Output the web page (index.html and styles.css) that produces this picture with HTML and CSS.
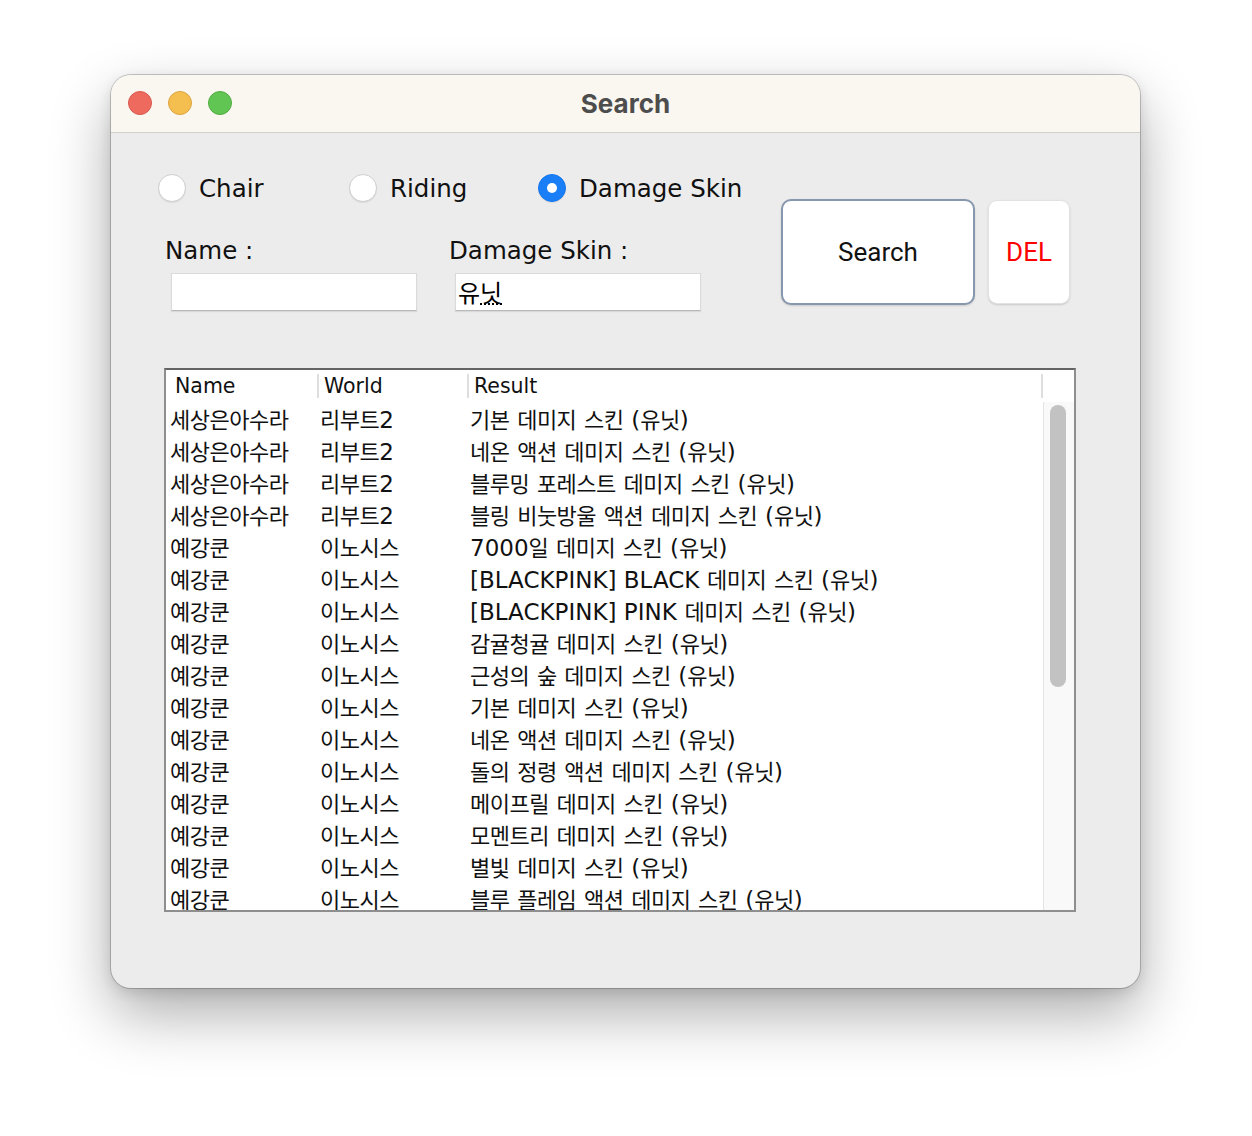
FILE: index.html
```html
<!DOCTYPE html>
<html lang="ko">
<head>
<meta charset="utf-8">
<title>Search</title>
<link rel="stylesheet" href="styles.css">
</head>
<body>
<div class="window">
  <div class="titlebar">
    <div class="lights">
      <span class="light red"></span>
      <span class="light yellow"></span>
      <span class="light green"></span>
    </div>
    <div class="title">Search</div>
  </div>
  <div class="content">
    <div class="top">
      <div class="left">
        <div class="radios">
          <label class="radio r1"><span class="dot"></span><span class="rtext">Chair</span></label>
          <label class="radio r2"><span class="dot"></span><span class="rtext">Riding</span></label>
          <label class="radio r3"><span class="dot on"></span><span class="rtext">Damage Skin</span></label>
        </div>
        <div class="fields">
          <div class="fcol">
            <div class="flabel">Name :</div>
            <div class="field"></div>
          </div>
          <div class="fcol">
            <div class="flabel">Damage Skin :</div>
            <div class="field"><span class="ftext">유<span class="ime">닛</span></span></div>
          </div>
        </div>
      </div>
      <div class="buttons">
        <div class="btn search">Search</div>
        <div class="btn del">DEL</div>
      </div>
    </div>

    <div class="table">
      <div class="thead">
        <div class="th c1">Name</div>
        <div class="th c2">World</div>
        <div class="th c3">Result</div>
        <div class="th c4"></div>
      </div>
      <div class="tbody">
        <div class="rows">
          <div class="tr"><div class="td c1">세상은아수라</div><div class="td c2">리부트<span class="l">2</span></div><div class="td c3">기본 데미지 스킨 <span class="l">(</span>유닛<span class="l">)</span></div></div>
          <div class="tr"><div class="td c1">세상은아수라</div><div class="td c2">리부트<span class="l">2</span></div><div class="td c3">네온 액션 데미지 스킨 <span class="l">(</span>유닛<span class="l">)</span></div></div>
          <div class="tr"><div class="td c1">세상은아수라</div><div class="td c2">리부트<span class="l">2</span></div><div class="td c3">블루밍 포레스트 데미지 스킨 <span class="l">(</span>유닛<span class="l">)</span></div></div>
          <div class="tr"><div class="td c1">세상은아수라</div><div class="td c2">리부트<span class="l">2</span></div><div class="td c3">블링 비눗방울 액션 데미지 스킨 <span class="l">(</span>유닛<span class="l">)</span></div></div>
          <div class="tr"><div class="td c1">예강쿤</div><div class="td c2">이노시스</div><div class="td c3"><span class="l">7000</span>일 데미지 스킨 <span class="l">(</span>유닛<span class="l">)</span></div></div>
          <div class="tr"><div class="td c1">예강쿤</div><div class="td c2">이노시스</div><div class="td c3"><span class="l">[BLACKPINK] BLACK</span> 데미지 스킨 <span class="l">(</span>유닛<span class="l">)</span></div></div>
          <div class="tr"><div class="td c1">예강쿤</div><div class="td c2">이노시스</div><div class="td c3"><span class="l">[BLACKPINK] PINK</span> 데미지 스킨 <span class="l">(</span>유닛<span class="l">)</span></div></div>
          <div class="tr"><div class="td c1">예강쿤</div><div class="td c2">이노시스</div><div class="td c3">감귤청귤 데미지 스킨 <span class="l">(</span>유닛<span class="l">)</span></div></div>
          <div class="tr"><div class="td c1">예강쿤</div><div class="td c2">이노시스</div><div class="td c3">근성의 숲 데미지 스킨 <span class="l">(</span>유닛<span class="l">)</span></div></div>
          <div class="tr"><div class="td c1">예강쿤</div><div class="td c2">이노시스</div><div class="td c3">기본 데미지 스킨 <span class="l">(</span>유닛<span class="l">)</span></div></div>
          <div class="tr"><div class="td c1">예강쿤</div><div class="td c2">이노시스</div><div class="td c3">네온 액션 데미지 스킨 <span class="l">(</span>유닛<span class="l">)</span></div></div>
          <div class="tr"><div class="td c1">예강쿤</div><div class="td c2">이노시스</div><div class="td c3">돌의 정령 액션 데미지 스킨 <span class="l">(</span>유닛<span class="l">)</span></div></div>
          <div class="tr"><div class="td c1">예강쿤</div><div class="td c2">이노시스</div><div class="td c3">메이프릴 데미지 스킨 <span class="l">(</span>유닛<span class="l">)</span></div></div>
          <div class="tr"><div class="td c1">예강쿤</div><div class="td c2">이노시스</div><div class="td c3">모멘트리 데미지 스킨 <span class="l">(</span>유닛<span class="l">)</span></div></div>
          <div class="tr"><div class="td c1">예강쿤</div><div class="td c2">이노시스</div><div class="td c3">별빛 데미지 스킨 <span class="l">(</span>유닛<span class="l">)</span></div></div>
          <div class="tr"><div class="td c1">예강쿤</div><div class="td c2">이노시스</div><div class="td c3">블루 플레임 액션 데미지 스킨 <span class="l">(</span>유닛<span class="l">)</span></div></div>
        </div>
        <div class="scrollbar"><div class="thumb"></div></div>
      </div>
    </div>
  </div>
</div>
</body>
</html>
```

FILE: styles.css
```css
html, body {
  margin: 0;
  padding: 0;
  background: #ffffff;
}
body {
  width: 1252px;
  height: 1136px;
  overflow: hidden;
  font-family: "DejaVu Sans", "Noto Sans CJK KR", sans-serif;
  color: #000;
}
.window {
  margin: 75px 0 0 111px;
  width: 1029px;
  height: 913px;
  border-radius: 20px;
  overflow: hidden;
  background: #ececec;
  box-shadow: 0 0 0 1px rgba(0,0,0,0.2), 0 26px 60px rgba(0,0,0,0.32), 0 4px 14px rgba(0,0,0,0.12);
  display: flex;
  flex-direction: column;
}
.titlebar {
  height: 57px;
  flex: none;
  background: #faf6f0;
  border-bottom: 1px solid #d4d0ca;
  display: flex;
  align-items: center;
  justify-content: center;
  position: relative;
}
.lights {
  position: absolute;
  left: 17px;
  top: 16px;
  display: flex;
  gap: 16px;
}
.light {
  width: 24px;
  height: 24px;
  border-radius: 50%;
  box-sizing: border-box;
}
.red { background: #ee6a5f; border: 1px solid #d9594e; }
.yellow { background: #f5bf4f; border: 1px solid #dba43f; }
.green { background: #61c554; border: 1px solid #50ab41; }
.title {
  font-family: "Inter", "DejaVu Sans", sans-serif;
  font-weight: 700;
  font-size: 26px;
  color: #4d4d4d;
}
.content {
  flex: 1;
}
.top {
  display: flex;
  padding: 41px 0 0 47px;
}
.left {
  width: 623px;
}
.radios {
  display: flex;
  height: 28px;
  align-items: center;
}
.radio {
  display: flex;
  align-items: center;
  gap: 13px;
  font-size: 24.5px;
  line-height: 28px;
}
.rtext { position: relative; top: 1px; color: #111; }
.r1 { width: 191px; }
.r2 { width: 189px; }
.dot {
  width: 28px;
  height: 28px;
  border-radius: 50%;
  box-sizing: border-box;
  background: #fff;
  border: 1px solid #cfcfcf;
  box-shadow: 0 1px 1px rgba(0,0,0,0.08);
  flex: none;
  display: flex;
  align-items: center;
  justify-content: center;
}
.dot.on {
  background: #1a7ff7;
  border-color: #1577ee;
}
.dot.on::after {
  content: "";
  width: 10px;
  height: 10px;
  border-radius: 50%;
  background: #fff;
}
.fields {
  display: flex;
  margin-top: 34px;
  padding-left: 7px;
}
.fcol {
  width: 284px;
}
.flabel {
  font-size: 24.5px;
  line-height: 29px;
  color: #111;
}
.field {
  margin: 8px 0 0 6px;
  width: 246px;
  height: 38px;
  box-sizing: border-box;
  background: #fff;
  border: 1px solid #dadada;
  border-bottom-color: #b9b9b9;
  box-shadow: 0 1px 1px rgba(0,0,0,0.08);
  padding-left: 2px;
  display: flex;
  align-items: center;
}
.ftext {
  font-family: "Noto Sans CJK KR", sans-serif;
  font-size: 24px;
  line-height: 30px;
}
.ime {
  text-decoration: underline dotted #000;
  text-decoration-thickness: 2px;
  text-underline-offset: 1px;
}
.buttons {
  display: flex;
  gap: 13px;
  margin-top: 25px;
  align-items: flex-start;
}
.btn {
  background: #fff;
  box-sizing: border-box;
  display: flex;
  align-items: center;
  justify-content: center;
  font-family: "Roboto", sans-serif;
  font-size: 26px;
}
.search {
  width: 194px;
  height: 106px;
  border: 2px solid #8797ad;
  border-radius: 10px;
  color: #111;
  box-shadow: 0 1px 2px rgba(0,0,0,0.15);
}
.del {
  width: 82px;
  height: 104px;
  margin-top: 1px;
  border-radius: 9px;
  color: #ff0000;
  border: 1px solid #e2e2e2;
  box-shadow: 0 1px 2px rgba(0,0,0,0.15);
}
.table {
  margin: 57px 0 0 53px;
  width: 912px;
  height: 544px;
  box-sizing: border-box;
  border: 2px solid #8e8e8e;
  border-top-color: #646464;
  background: #fff;
  overflow: hidden;
  display: flex;
  flex-direction: column;
}
.thead {
  display: flex;
  height: 32px;
  flex: none;
  align-items: center;
}
.th {
  font-size: 20.5px;
  line-height: 24px;
  color: #111;
  box-sizing: border-box;
  padding-left: 5px;
}
.thead .c1 { width: 151px; padding-left: 9px; }
.thead .c2, .thead .c3, .thead .c4 { border-left: 2px solid #dedede; }
.thead .c2 { width: 150px; }
.thead .c3 { width: 574px; }
.thead .c4 { width: 33px; height: 24px; }
.tbody {
  flex: 1;
  display: flex;
  min-height: 0;
}
.rows {
  width: 877px;
  flex: none;
}
.tr {
  display: flex;
  height: 32px;
}
.td {
  font-family: "Noto Sans CJK KR", sans-serif;
  font-size: 22px;
  letter-spacing: -0.5px;
  word-spacing: 2px;
  line-height: 32px;
  white-space: nowrap;
  color: #111;
  box-sizing: border-box;
  padding-left: 3px;
}
.td.c1 { width: 151px; padding-left: 4px; }
.td.c2 { width: 150px; }
.td.c3 { width: 576px; }
.l {
  font-family: "DejaVu Sans", sans-serif;
  font-size: 23px;
  letter-spacing: 0;
  word-spacing: 0;
}
.scrollbar {
  width: 31px;
  flex: none;
  background: #f9f9f9;
  border-left: 1px solid #e4e4e4;
  box-sizing: border-box;
  padding: 3px 0 0 6px;
}
.thumb {
  width: 16px;
  height: 282px;
  border-radius: 8px;
  background: #c2c2c2;
}
```
